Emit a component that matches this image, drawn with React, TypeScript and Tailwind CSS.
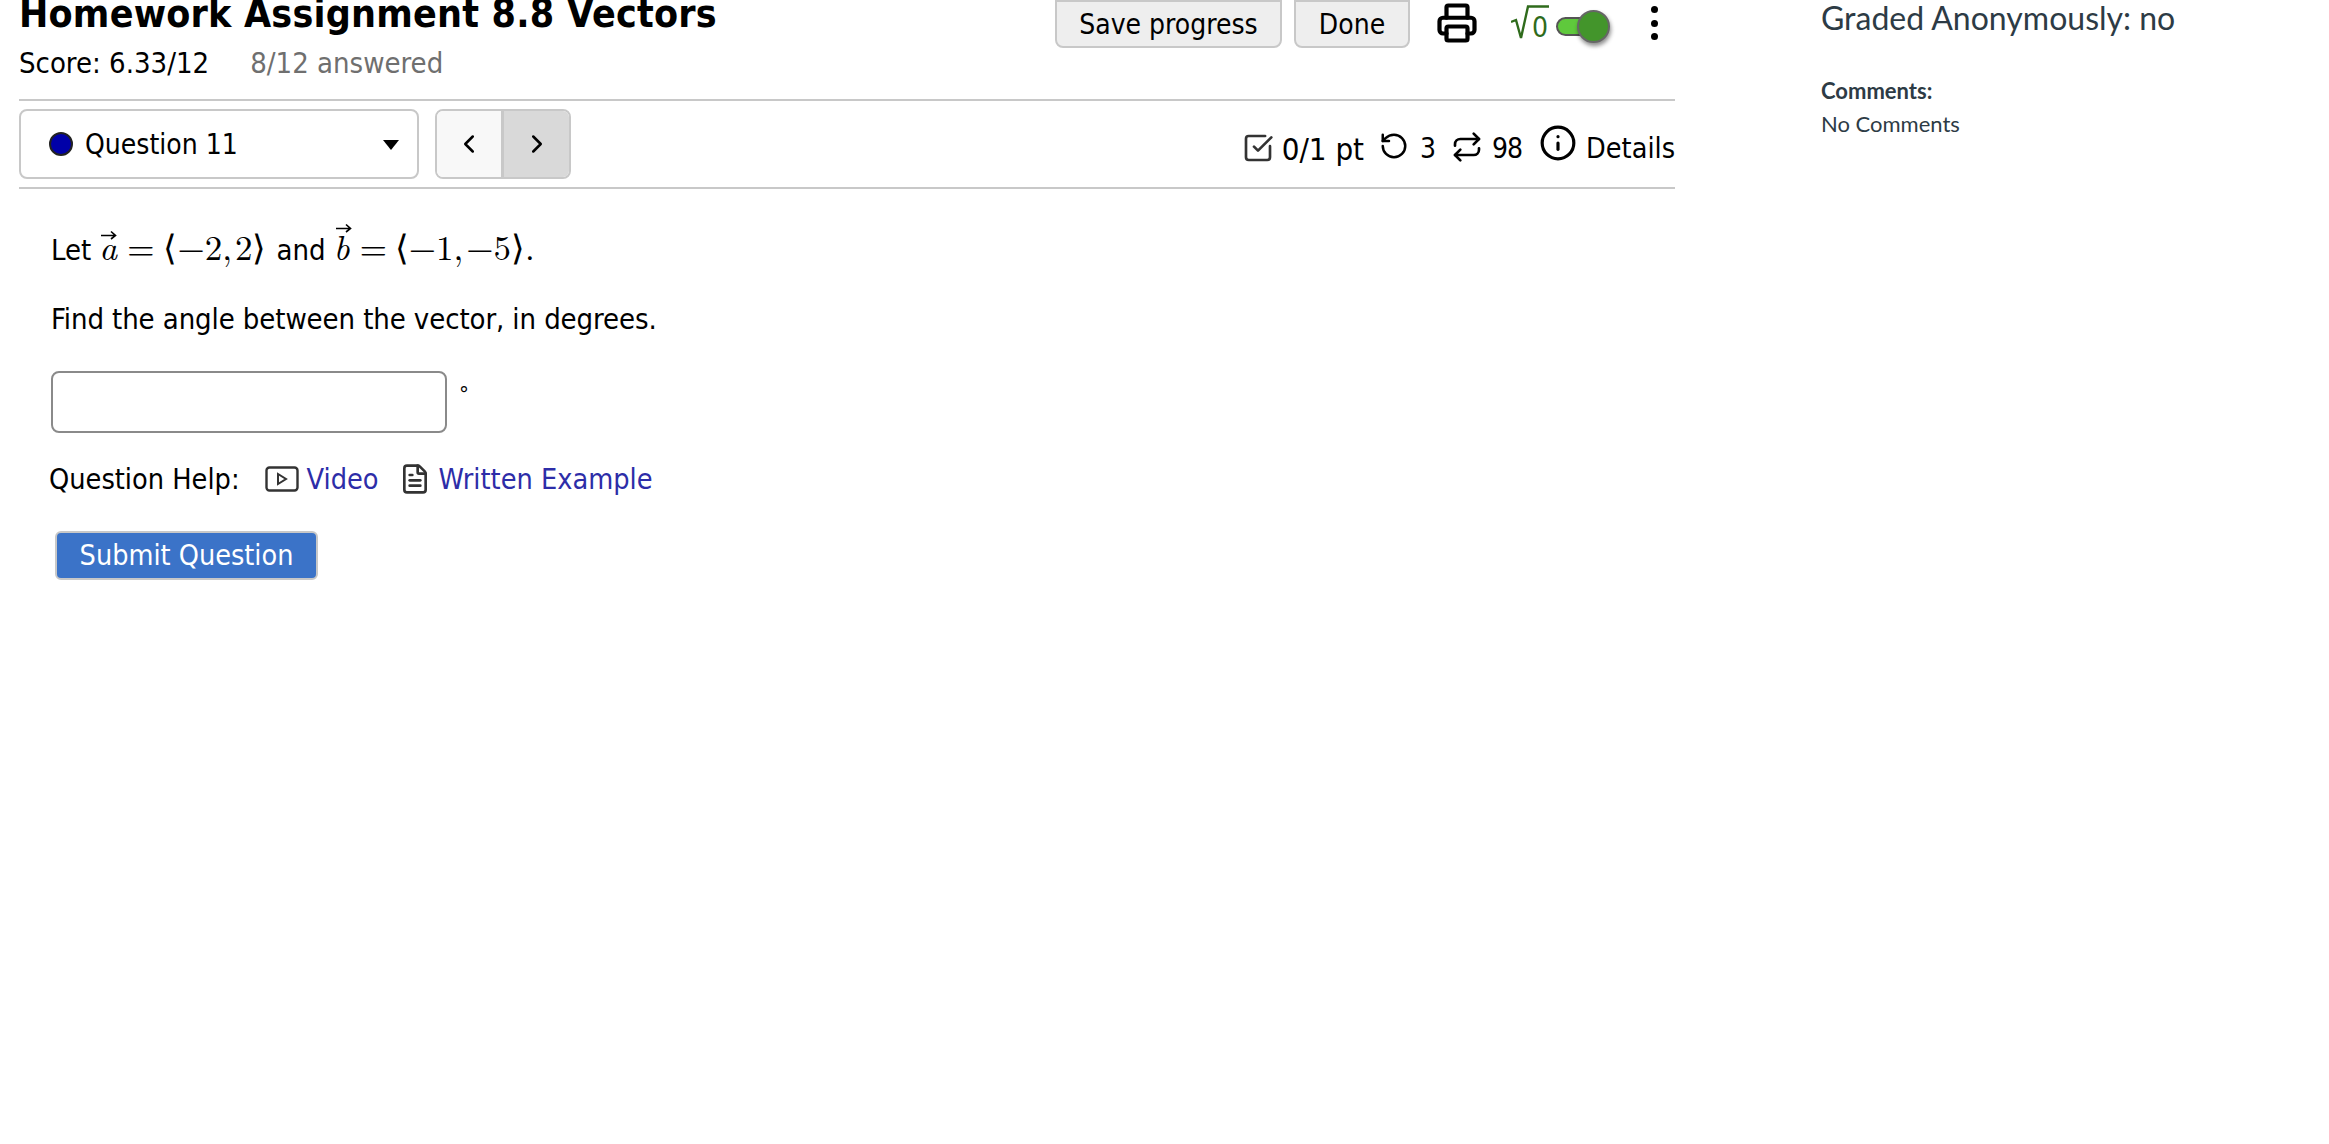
import { Printer, SquareCheckBig, RotateCcw, Repeat, Info, FileText, ChevronLeft, ChevronRight } from 'lucide-react'

const bodyFont = "font-['DejaVu_Sans_Condensed','Noto_Sans',sans-serif]"
const mathFont = "font-['Latin_Modern_Roman','Liberation_Serif',serif]"

// Letter with a vector arrow sitting on top of it
function Vec({ letter, top }: { letter: string; top: string }) {
  return (
    <span className="relative inline-block italic">
      {letter}
      <svg className={`absolute left-[1px] ${top} w-[17px] h-[10px]`} viewBox="0 0 17 10" fill="none" stroke="#000" strokeWidth="1.6">
        <path d="M1 5.5h14M11 1.5 15.5 5.5 11 9" />
      </svg>
    </span>
  )
}

function Header() {
  return (
    <div className="flex justify-between h-[101px] border-b-2 border-[#c8c8c8]">
      <div>
        <h1 className="text-[39px] leading-[46px] font-bold tracking-[0.2px] mt-[-9px] text-black whitespace-nowrap">Homework Assignment 8.8 Vectors</h1>
        <div className="flex gap-[41px] text-[29px] leading-[36px] mt-[8px] whitespace-nowrap">
          <span>Score: 6.33/12</span>
          <span className="text-[#6f6f6f]">8/12 answered</span>
        </div>
      </div>
      <div className="flex items-start">
        <button className="w-[227px] h-[48px] bg-[#eeeeee] border-2 border-[#c8c8c8] rounded-b-lg text-[28px] leading-[46px]">Save progress</button>
        <button className="w-[116px] h-[48px] ml-[12px] bg-[#eeeeee] border-2 border-[#c8c8c8] rounded-b-lg text-[28px] leading-[46px]">Done</button>
        <Printer size={42} strokeWidth={2.4} className="ml-[26px] mt-[2px]" />
        <div className="relative ml-[33px] mt-[5px] w-[38px] h-[36px]">
          <svg className="absolute left-0 top-0" width="38" height="36" viewBox="0 0 38 36" fill="none" stroke="#2f6b1c" strokeWidth="2.4">
            <path d="M0 17 5 15 10 33 17 1.500H38" />
          </svg>
          <span className="absolute left-[21px] top-[5px] text-[#2f6b1c] text-[28px] leading-[36px] font-medium">0</span>
        </div>
        <div className="relative ml-[7px] mt-[17px] w-[44px] h-[19px] rounded-full bg-[#5fc93c] border-[2.500px] border-[#555]">
          <span className="absolute left-[19px] top-[-9.500px] w-[33px] h-[33px] rounded-full bg-[#43952b] border-2 border-[#666] shadow-[1px_3px_4px_rgba(0,0,0,0.45)]" />
        </div>
        <div className="flex flex-col gap-[6.500px] ml-[51px] mr-[17px] mt-[6px]">
          <span className="w-[7px] h-[7px] rounded-full bg-black" />
          <span className="w-[7px] h-[7px] rounded-full bg-black" />
          <span className="w-[7px] h-[7px] rounded-full bg-black" />
        </div>
      </div>
    </div>
  )
}

function QuestionBar() {
  return (
    <div className="flex items-start justify-between h-[88px] border-b-2 border-[#c8c8c8] pt-[8px]">
      <div className="flex">
        <div className="flex items-center w-[400px] h-[70px] border-2 border-[#c8c8c8] rounded-lg pl-[28px] pr-[18px]">
          <span className="w-[24px] h-[24px] rounded-full bg-[#0000a8] border-2 border-[#222]" />
          <span className="ml-[12px] mt-[2px] text-[28px]">Question 11</span>
          <span className="ml-auto mt-[2px] w-0 h-0 border-x-[8px] border-x-transparent border-t-[10px] border-t-black" />
        </div>
        <div className="flex ml-[16px] h-[70px] border-2 border-[#c8c8c8] rounded-lg overflow-hidden">
          <div className="w-[67px] flex items-center justify-center bg-[#f8f8f8] border-r-[3px] border-[#c8c8c8]"><ChevronLeft size={30} /></div>
          <div className="w-[65px] flex items-center justify-center bg-[#d9d9d9]"><ChevronRight size={30} /></div>
        </div>
      </div>
      <div className="flex items-center h-[70px] text-[28px] whitespace-nowrap">
        <SquareCheckBig size={32} strokeWidth={2} color="#333" className="mt-[8px]" />
        <span className="ml-[8px] mt-[10px] text-[31px]">0/1 pt</span>
        <RotateCcw size={30} className="ml-[15px] mt-[3px]" />
        <span className="ml-[11px] mt-[10px]">3</span>
        <Repeat size={32} className="ml-[15px] mt-[5px]" />
        <span className="ml-[9px] mt-[10px] tracking-[-1px]">98</span>
        <Info size={38} className="ml-[17px] mt-[-2px]" />
        <span className="ml-[9px] mt-[10px] text-[28.500px]">Details</span>
      </div>
    </div>
  )
}

function QuestionBody() {
  return (
    <div className="pl-[32px] text-[29px] text-black">
      <p className="mt-[35px] h-[44px] leading-[44px] whitespace-nowrap flex items-baseline">
        <span>Let</span>
        <span className={`${mathFont} text-[35px] ml-[8px]`}>
          <Vec letter="a" top="top-[6px]" />
          <span className="ml-[10px]">=</span>
          <span className="ml-[9px]">⟨−2,<span className="ml-[3px]">2</span>⟩</span>
        </span>
        <span className="ml-[10px]">and</span>
        <span className={`${mathFont} text-[35px] ml-[8px]`}>
          <Vec letter="b" top="top-[-1px]" />
          <span className="ml-[10px]">=</span>
          <span className="ml-[8px]">⟨−1,<span className="ml-[3px]">−5</span>⟩.</span>
        </span>
      </p>
      <p className="mt-[33px] leading-[36px] tracking-[-0.1px] whitespace-nowrap">Find the angle between the vector, in degrees.</p>
      <div className="flex items-start mt-[34px]">
        <input className="w-[396px] h-[62px] border-2 border-[#8a8a8a] rounded-lg bg-white" />
        <span className="ml-[12px] mt-[8px] text-[22px] leading-[32px]">°</span>
      </div>
      <div className="flex items-center mt-[28px] ml-[-2px] h-[36px] text-[28.600px] whitespace-nowrap">
        <span>Question Help:</span>
        <svg className="ml-[25px]" width="34" height="26" viewBox="0 0 34 26" fill="none" stroke="#333" strokeWidth="2.4">
          <rect x="1.5" y="1.5" width="31" height="23" rx="3" />
          <path d="M13 8v10l8-5z" strokeWidth="2" />
        </svg>
        <span className="ml-[8px] text-[#2d2da8]">Video</span>
        <FileText size={32} color="#333" className="ml-[20px]" />
        <span className="ml-[8px] text-[#2d2da8]">Written Example</span>
      </div>
      <button className="block mt-[34px] ml-[4px] w-[263px] h-[49px] bg-[#3b73c8] border-2 border-[#c8c8c8] rounded-md text-white text-[28.500px] leading-[44px]">
        Submit Question
      </button>
    </div>
  )
}

export default function App() {
  return (
    <div className="flex h-[1144px] overflow-hidden bg-white text-black">
      <main className={`w-[1656px] ml-[19px] shrink-0 ${bodyFont}`}>
        <Header />
        <QuestionBar />
        <QuestionBody />
      </main>
      <aside className="ml-[146px] font-['Lato',sans-serif] text-[#2d3b45]">
        <p className="text-[32px] leading-[36px] whitespace-nowrap">Graded Anonymously: no</p>
        <p className="text-[22px] leading-[30px] font-bold mt-[40px]">Comments:</p>
        <p className="text-[22px] leading-[30px] mt-[3px]">No Comments</p>
      </aside>
    </div>
  )
}
